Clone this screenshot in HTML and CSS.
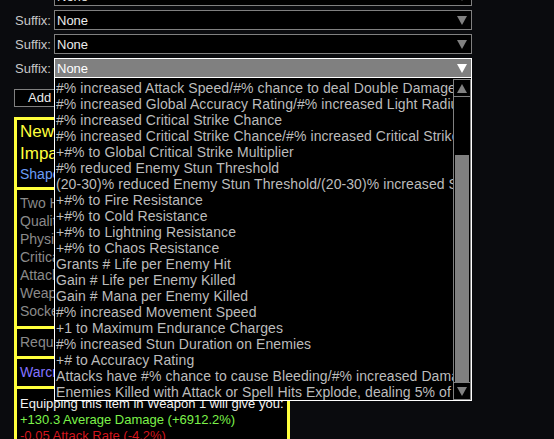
FILE: index.html
```
<!DOCTYPE html>
<html>
<head>
<meta charset="utf-8">
<link rel="stylesheet" href="styles.css">
</head>
<body>
<div class="page">
  <div class="rows">
    <div class="row">
      <span class="label"></span>
      <div class="select"><span class="val">None</span><svg class="arrow" width="10" height="9" viewBox="0 0 10 9"><polygon points="0,0 10,0 5,9"/></svg></div>
    </div>
    <div class="row">
      <span class="label">Suffix:</span>
      <div class="select"><span class="val">None</span><svg class="arrow" width="10" height="9" viewBox="0 0 10 9"><polygon points="0,0 10,0 5,9"/></svg></div>
    </div>
    <div class="row">
      <span class="label">Suffix:</span>
      <div class="select"><span class="val">None</span><svg class="arrow" width="10" height="9" viewBox="0 0 10 9"><polygon points="0,0 10,0 5,9"/></svg></div>
    </div>
    <div class="row">
      <span class="label">Suffix:</span>
      <div class="select open"><span class="val">None</span><svg class="arrow" width="10" height="9" viewBox="0 0 10 9"><polygon points="0,0 10,0 5,9"/></svg>
        <div class="dropdown">
          <div class="options">
            <div class="opt">#% increased Attack Speed/#% chance to deal Double Damage</div>
            <div class="opt">#% increased Global Accuracy Rating/#% increased Light Radius</div>
            <div class="opt">#% increased Critical Strike Chance</div>
            <div class="opt">#% increased Critical Strike Chance/#% increased Critical Strike Multiplier</div>
            <div class="opt">+#% to Global Critical Strike Multiplier</div>
            <div class="opt">#% reduced Enemy Stun Threshold</div>
            <div class="opt">(20-30)% reduced Enemy Stun Threshold/(20-30)% increased Stun Duration on Enemies</div>
            <div class="opt">+#% to Fire Resistance</div>
            <div class="opt">+#% to Cold Resistance</div>
            <div class="opt">+#% to Lightning Resistance</div>
            <div class="opt">+#% to Chaos Resistance</div>
            <div class="opt">Grants # Life per Enemy Hit</div>
            <div class="opt">Gain # Life per Enemy Killed</div>
            <div class="opt">Gain # Mana per Enemy Killed</div>
            <div class="opt">#% increased Movement Speed</div>
            <div class="opt">+1 to Maximum Endurance Charges</div>
            <div class="opt">#% increased Stun Duration on Enemies</div>
            <div class="opt">+# to Accuracy Rating</div>
            <div class="opt">Attacks have #% chance to cause Bleeding/#% increased Damage with Bleeding</div>
            <div class="opt">Enemies Killed with Attack or Spell Hits Explode, dealing 5% of their Life as Physical Damage</div>
          </div>
          <div class="scrollbar">
            <div class="sb-btn sb-up"><svg width="10" height="9" viewBox="0 0 10 9"><polygon points="0,9 10,9 5,0"/></svg></div>
            <div class="sb-track"><div class="sb-thumb"></div></div>
            <div class="sb-btn sb-down"><svg width="10" height="9" viewBox="0 0 10 9"><polygon points="0,0 10,0 5,9"/></svg></div>
          </div>
        </div>
      </div>
    </div>
  </div>

  <button class="add">Add to build</button>

  <div class="item">
    <div class="sec head">
      <div class="name">New Item</div>
      <div class="name">Impact Force Maul</div>
      <div class="shaper">Shaper Item</div>
    </div>
    <div class="sec props">
      <div>Two Handed Mace</div>
      <div>Quality: +20%</div>
      <div>Physical Damage: 52-108</div>
      <div>Critical Strike Chance: 5.00%</div>
      <div>Attacks per Second: 1.25</div>
      <div>Weapon Range: 13</div>
      <div>Sockets: R-R-R-G-G-B</div>
    </div>
    <div class="sec props single">
      <div>Requires Level 68, 212 Str</div>
    </div>
    <div class="sec props single">
      <div class="mod">Warcries Knock Back Enemies</div>
    </div>
    <div class="sec equip">
      <div>Equipping this item in Weapon 1 will give you:</div>
      <div class="pos">+130.3 Average Damage (+6912.2%)</div>
      <div class="neg">-0.05 Attack Rate (-4.2%)</div>
    </div>
  </div>
</div>
</body>
</html>
```
FILE: styles.css
```
html, body {
  margin: 0;
  padding: 0;
  background: #0a0b0e;
  font-family: "Liberation Sans", Arial, sans-serif;
  overflow: hidden;
}

.page {
  padding-left: 14px;
}

.rows {
  margin-top: -14px;
  display: flex;
  flex-direction: column;
  gap: 4px;
}

.row {
  display: flex;
  align-items: center;
  height: 20px;
}

.label {
  width: 39px;
  padding-left: 1px;
  font-size: 13px;
  color: #c8c8c8;
}

.select {
  position: relative;
  box-sizing: border-box;
  width: 418px;
  height: 20px;
  border: 1px solid #808080;
  background: #000;
  display: flex;
  align-items: center;
  justify-content: space-between;
  padding: 0 4px 0 2px;
  font-size: 13px;
  color: #ececec;
}

.arrow {
  fill: #808080;
  display: block;
}

.select.open {
  background: #808080;
  border-color: #ffffff;
  color: #ffffff;
}

.select.open .arrow {
  fill: #ffffff;
}

.dropdown {
  position: absolute;
  top: 18px;
  left: -1px;
  width: 418px;
  height: 324px;
  box-sizing: border-box;
  border: 1px solid #ffffff;
  background: #000;
  display: flex;
  z-index: 5;
}

.options {
  flex: 1;
  overflow: hidden;
  padding-top: 2px;
  padding-left: 1px;
}

.opt {
  font-size: 14px;
  line-height: 16px;
  height: 16px;
  white-space: nowrap;
  letter-spacing: 0.08px;
  color: #bcbcbc;
}

.scrollbar {
  box-sizing: border-box;
  width: 18px;
  height: 321px;
  margin-top: 1px;
  border: 1px solid #808080;
  display: flex;
  flex-direction: column;
}

.sb-btn {
  box-sizing: border-box;
  height: 17px;
  display: flex;
  align-items: center;
  justify-content: center;
  fill: #808080;
}

.sb-btn svg {
  display: block;
}

.sb-up {
  border-bottom: 1px solid #808080;
}

.sb-down {
  border-top: 1px solid #808080;
}

.sb-track {
  flex: 1;
  display: flex;
  flex-direction: column;
}

.sb-thumb {
  margin: 58px 1px 0 1px;
  height: 227px;
  background: #808080;
}

.add {
  display: block;
  margin: 11px 0 0 0;
  box-sizing: border-box;
  height: 18px;
  width: 120px;
  padding: 0 0 0 13px;
  text-align: left;
  border: 1px solid #808080;
  background: #000;
  color: #ececec;
  font-family: "Liberation Sans", Arial, sans-serif;
  font-size: 13px;
  line-height: 16px;
}

.item {
  margin-top: 10px;
  box-sizing: border-box;
  width: 276px;
  border: 3px solid #ffff3c;
  border-bottom: none;
  background: #000;
  height: 330px;
}

.sec {
  padding-left: 3px;
  white-space: nowrap;
  overflow: hidden;
}

.sec + .sec {
  border-top: 3px solid #ffff3c;
}

.head {
  padding-top: 1px;
  padding-bottom: 4px;
}

.name {
  font-size: 17px;
  line-height: 22px;
  color: #ffff3c;
}

.shaper {
  font-size: 14px;
  line-height: 18px;
  color: #6a9cf6;
}

.props {
  padding-top: 4px;
  padding-bottom: 6px;
  font-size: 14px;
  line-height: 18px;
  color: #8a8a8a;
}

.props.single {
  padding-bottom: 5px;
}

.mod {
  color: #8272ff;
}

.equip {
  padding-top: 7px;
  font-size: 13px;
  line-height: 16px;
  color: #f2f2f2;
}

.pos {
  color: #7cf24a;
}

.neg {
  color: #d4141c;
}
```
